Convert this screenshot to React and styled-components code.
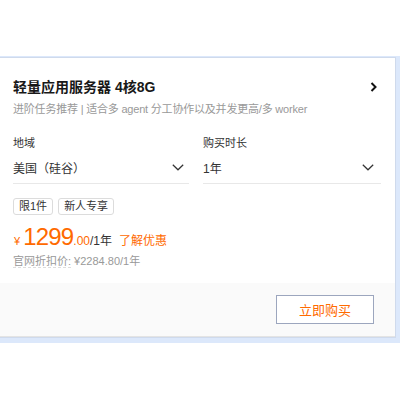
import React from "react";
import styled, { createGlobalStyle } from "styled-components";

const GlobalStyle = createGlobalStyle`
  html, body {
    margin: 0;
    padding: 0;
    background: #ffffff;
    font-family: "Liberation Sans", "Noto Sans CJK SC", sans-serif;
  }
`;

const Frame = styled.div`
  margin-top: 56px;
  width: 400px;
  box-sizing: border-box;
  background: #dce8fb;
  padding: 2px 5px 6px 0;
`;

const Card = styled.div`
  background: #ffffff;
  box-shadow: 0 0 0 1px rgba(0, 0, 0, 0.06);
  display: flex;
  flex-direction: column;
`;

const Body = styled.div`
  padding: 19px 14px 14px 13px;
  display: flex;
  flex-direction: column;
`;

const TitleRow = styled.div`
  display: flex;
  align-items: center;
  justify-content: space-between;
  height: 20px;
`;

const Title = styled.h2`
  margin: 0;
  font-size: 14px;
  font-weight: 700;
  color: #181818;
  line-height: 20px;
`;

const Subtitle = styled.div`
  margin-top: 4px;
  font-size: 11px;
  letter-spacing: -0.2px;
  line-height: 16px;
  color: #999999;
`;

const Fields = styled.div`
  margin-top: 18px;
  display: grid;
  grid-template-columns: 176px 1fr;
  column-gap: 14px;
`;

const Field = styled.div`
  display: flex;
  flex-direction: column;
`;

const Label = styled.div`
  font-size: 11px;
  line-height: 16px;
  color: #333333;
`;

const Select = styled.div`
  margin-top: 4px;
  height: 24px;
  padding-bottom: 4px;
  border-bottom: 1px solid #e8e8e8;
  display: flex;
  align-items: center;
  justify-content: space-between;
  font-size: 12px;
  color: #333333;
  padding-right: ${(p) => p.$pr || 5}px;
`;

const Tags = styled.div`
  margin-top: 14px;
  display: flex;
  gap: 5px;
`;

const Tag = styled.span`
  height: 17px;
  box-sizing: border-box;
  padding: 0 5px;
  border: 1px solid #dcdcdc;
  border-radius: 3px;
  font-size: 11px;
  line-height: 15px;
  color: #333333;
`;

const PriceRow = styled.div`
  margin-top: 8px;
  display: flex;
  align-items: baseline;
  line-height: 28px;
  height: 28px;
`;

const Orange = styled.span`
  color: #ff6a00;
  font-size: ${(p) => p.$size || 12}px;
  letter-spacing: ${(p) => p.$ls || 0}px;
  margin-left: ${(p) => p.$ml || 0}px;
`;

const Unit = styled.span`
  font-size: 12px;
  color: #333333;
`;

const Discount = styled.div`
  margin-top: 2px;
  font-size: 11px;
  line-height: 16px;
  color: #999999;
`;

const Dashed = styled.span`
  border-bottom: 1px dashed #dddddd;
`;

const Footer = styled.div`
  height: 53px;
  background: #fafafa;
  display: flex;
  align-items: center;
  justify-content: flex-end;
  padding-right: 21px;
  border-bottom: 1px solid #e4e4e4;
`;

const BuyButton = styled.button`
  width: 98px;
  height: 29px;
  background: #ffffff;
  border: 1px solid #9ca6be;
  color: #ff6a00;
  font-family: "Liberation Sans", "Noto Sans CJK SC", sans-serif;
  font-size: 13px;
  cursor: pointer;
`;

const ChevronDown = () => (
  <svg width="12" height="7" viewBox="0 0 12 7">
    <polyline points="0.8,0.8 6,5.8 11.2,0.8" fill="none" stroke="#333" strokeWidth="1.2" />
  </svg>
);

const ChevronRight = () => (
  <svg width="7" height="10" viewBox="0 0 7 10">
    <polyline points="1.5,1 5.5,5 1.5,9" fill="none" stroke="#111" strokeWidth="2" />
  </svg>
);

export default function App() {
  return (
    <>
      <GlobalStyle />
      <Frame>
        <Card>
          <Body>
            <TitleRow>
              <Title>轻量应用服务器 4核8G</Title>
              <span style={{ marginRight: 4, display: "flex" }}>
                <ChevronRight />
              </span>
            </TitleRow>
            <Subtitle>进阶任务推荐 | 适合多 agent 分工协作以及并发更高/多 worker</Subtitle>
            <Fields>
              <Field>
                <Label>地域</Label>
                <Select $pr={5}>
                  <span>美国（硅谷）</span>
                  <ChevronDown />
                </Select>
              </Field>
              <Field>
                <Label>购买时长</Label>
                <Select $pr={7}>
                  <span>1年</span>
                  <ChevronDown />
                </Select>
              </Field>
            </Fields>
            <Tags>
              <Tag>限1件</Tag>
              <Tag>新人专享</Tag>
            </Tags>
            <PriceRow>
              <Orange $size={11} $ml={1}>¥</Orange>
              <Orange $size={24} $ls={-0.8} $ml={3}>1299</Orange>
              <Orange $size={12}>.00</Orange>
              <Unit>/1年</Unit>
              <Orange $size={12} $ml={7}>了解优惠</Orange>
            </PriceRow>
            <Discount>
              <Dashed>官网折扣价:</Dashed> ¥2284.80/1年
            </Discount>
          </Body>
          <Footer>
            <BuyButton>立即购买</BuyButton>
          </Footer>
        </Card>
      </Frame>
    </>
  );
}
